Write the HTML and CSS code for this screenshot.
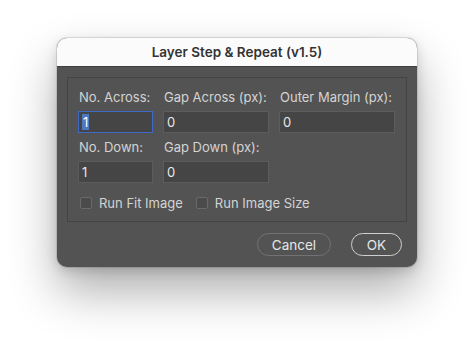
FILE: index.html
```html
<!DOCTYPE html>
<html lang="en">
<head>
    <meta charset="UTF-8">
    <meta name="viewport" content="width=device-width, initial-scale=1.0">
    <title>Layer Step &amp; Repeat</title>
    <link rel="stylesheet" href="styles.css">
</head>
<body>
    <div class="dialog">
        <div class="titleBar">Layer Step &amp; Repeat (v1.5)</div>
        <div class="dialogBody">
            <div class="panel">
                <div class="fields">
                    <label class="field">
                        <span class="lbl">No. Across:</span>
                        <span class="inp focused"><span class="sel">1</span></span>
                    </label>
                    <label class="field">
                        <span class="lbl">Gap Across (px):</span>
                        <span class="inp">0</span>
                    </label>
                    <label class="field">
                        <span class="lbl">Outer Margin (px):</span>
                        <span class="inp">0</span>
                    </label>
                    <label class="field">
                        <span class="lbl">No. Down:</span>
                        <span class="inp">1</span>
                    </label>
                    <label class="field">
                        <span class="lbl">Gap Down (px):</span>
                        <span class="inp">0</span>
                    </label>
                </div>
                <div class="checks">
                    <label class="check"><span class="box"></span>Run Fit Image</label>
                    <label class="check"><span class="box"></span>Run Image Size</label>
                </div>
            </div>
            <div class="buttons">
                <button class="btn cancelBtn">Cancel</button>
                <button class="btn okBtn">OK</button>
            </div>
        </div>
    </div>
</body>
</html>
```

FILE: styles.css
```css
html{
    background: #ffffff;
}
body{
    margin: 0;
    padding: 38px 0 0 57px;
    min-height: 100vh;
    box-sizing: border-box;
    font-family: "Inter", "Liberation Sans", sans-serif;
    font-size: 13px;
}
.dialog{
    width: 360px;
    border-radius: 10px;
    overflow: hidden;
    background: #535353;
    box-shadow: 0 24px 48px rgba(0,0,0,0.32), 0 4px 12px rgba(0,0,0,0.15), 0 0 0 1px rgba(0,0,0,0.1);
}
.titleBar{
    height: 28px;
    line-height: 29px;
    background: #fbfbfb;
    color: #333;
    font-weight: 600;
    font-size: 13.5px;
    text-align: center;
    border-bottom: 1px solid #3f3f3f;
}
.dialogBody{
    padding: 10px 10px 11px 10px;
}
.panel{
    border: 1px solid #444;
    padding: 11px 10px 10px 10px;
}
.fields{
    display: grid;
    grid-template-columns: 75px 106px 116px;
    column-gap: 10px;
    row-gap: 6px;
}
.field{
    display: flex;
    flex-direction: column;
}
.lbl{
    color: #d4d4d4;
    line-height: 16px;
    margin-bottom: 6px;
    padding-left: 1px;
    white-space: nowrap;
}
.inp{
    height: 20px;
    line-height: 20px;
    background: #454545;
    border: 1px solid #5c5c5c;
    color: #e8e8e8;
    padding-left: 3px;
}
.focused{
    border-color: #3c6ac4;
}
.sel{
    background: #4f78c2;
    color: #fff;
    padding: 0 1px;
}
.checks{
    display: flex;
    gap: 13px;
    margin-top: 12px;
    padding-left: 2px;
}
.check{
    display: flex;
    align-items: center;
    gap: 7px;
    color: #d4d4d4;
    line-height: 16px;
}
.box{
    width: 10px;
    height: 10px;
    border: 1px solid #6a6a6a;
    border-radius: 2px;
    background: #4b4b4b;
}
.buttons{
    display: flex;
    justify-content: flex-end;
    gap: 20px;
    margin-top: 11px;
    padding-right: 5px;
}
.btn{
    height: 23px;
    border-radius: 12px;
    background: transparent;
    color: #e6e6e6;
    font-family: inherit;
    font-size: 13.5px;
    padding: 0;
}
.cancelBtn{
    width: 74px;
    border: 1px solid #727272;
}
.okBtn{
    width: 51px;
    border: 1px solid #cfcfcf;
}
```
